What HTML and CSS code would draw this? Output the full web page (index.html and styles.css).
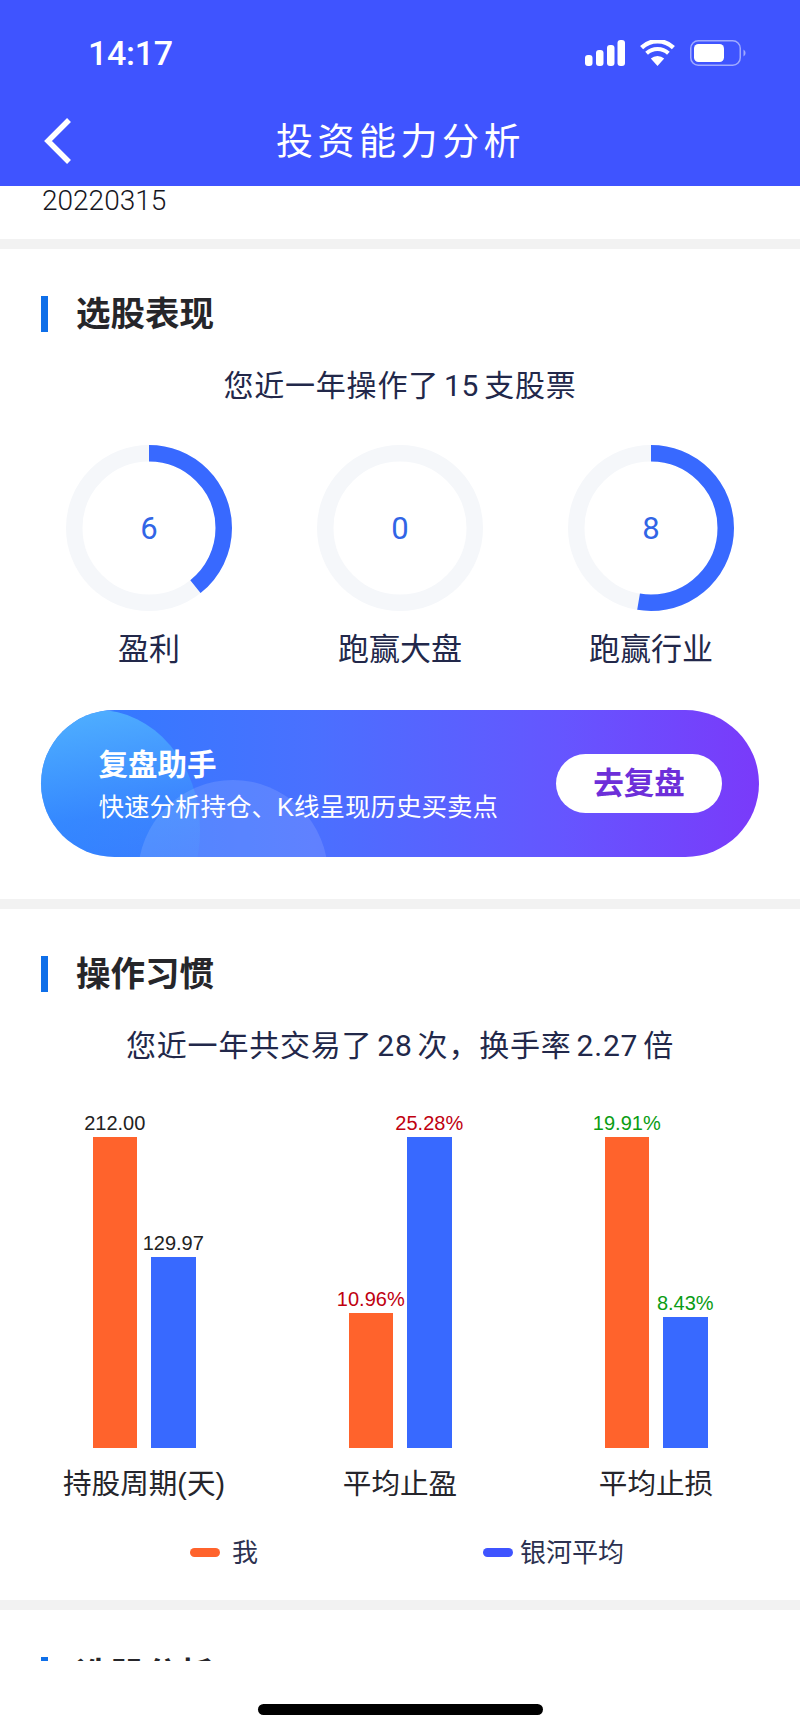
FILE: index.html
```html
<!DOCTYPE html>
<html lang="zh-CN">
<head>
<meta charset="utf-8">
<title>投资能力分析</title>
<link rel="stylesheet" href="styles.css">
</head>
<body>
<div class="app">
  <header class="header">
    <div class="status">
      <span class="time">14:17</span>
      <div class="status-icons">
        <svg class="signal" width="40" height="26" viewBox="0 0 40 26" fill="#fff">
          <rect x="0" y="15" width="7.5" height="11" rx="3"/>
          <rect x="11" y="10" width="7.5" height="16" rx="3"/>
          <rect x="22" y="5" width="7.5" height="21" rx="3"/>
          <rect x="32.5" y="0" width="7.5" height="26" rx="3"/>
        </svg>
        <svg class="wifi" width="35" height="26" viewBox="0 0 35 26">
          <path d="M17.5 26 L10.8 18.6 A10 10 0 0 1 24.2 18.6 Z" fill="#fff"/>
          <path d="M6.6 13.2 A16 16 0 0 1 28.4 13.2" fill="none" stroke="#fff" stroke-width="4"/>
          <path d="M1.6 7.6 A23 23 0 0 1 33.4 7.6" fill="none" stroke="#fff" stroke-width="4.4"/>
        </svg>
        <svg class="battery" width="56" height="26" viewBox="0 0 56 26">
          <rect x="0.75" y="0.75" width="49.5" height="24.5" rx="7.5" fill="none" stroke="#fff" stroke-opacity=".5" stroke-width="1.5"/>
          <rect x="4" y="4" width="30" height="18" rx="4.5" fill="#fff"/>
          <path d="M53.5 9.5 A4 4 0 0 1 53.5 16.5 Z" fill="#fff" fill-opacity=".5"/>
        </svg>
      </div>
    </div>
    <div class="nav">
      <svg class="back" width="28" height="46" viewBox="0 0 28 46">
        <path d="M25 2 L4 23 L25 44" fill="none" stroke="#fff" stroke-width="5.5"/>
      </svg>
      <h1 class="nav-title">投资能力分析</h1>
    </div>
  </header>

  <main class="scroll">
    <section class="date-card">20220315</section>

    <section class="card card-stocks">
      <h2 class="card-title">选股表现</h2>
      <p class="summary">您近一年操作了 15 支股票</p>
      <div class="rings">
        <div class="ring-item">
          <div class="ring">
            <svg class="ring-svg" width="166" height="166" viewBox="0 0 166 166">
              <circle class="ring-track" cx="83" cy="83" r="74.75"/>
              <circle class="ring-value" cx="83" cy="83" r="74.75" pathLength="15" stroke-dasharray="5.9 15"/>
            </svg>
            <span class="ring-num">6</span>
          </div>
          <div class="ring-label">盈利</div>
        </div>
        <div class="ring-item">
          <div class="ring">
            <svg class="ring-svg" width="166" height="166" viewBox="0 0 166 166">
              <circle class="ring-track" cx="83" cy="83" r="74.75"/>
            </svg>
            <span class="ring-num">0</span>
          </div>
          <div class="ring-label">跑赢大盘</div>
        </div>
        <div class="ring-item">
          <div class="ring">
            <svg class="ring-svg" width="166" height="166" viewBox="0 0 166 166">
              <circle class="ring-track" cx="83" cy="83" r="74.75"/>
              <circle class="ring-value" cx="83" cy="83" r="74.75" pathLength="15" stroke-dasharray="7.9 15"/>
            </svg>
            <span class="ring-num">8</span>
          </div>
          <div class="ring-label">跑赢行业</div>
        </div>
      </div>
      <div class="banner">
        <span class="blob blob-a"></span>
        <span class="blob blob-b"></span>
        <div class="banner-text">
          <div class="banner-title">复盘助手</div>
          <div class="banner-sub">快速分析持仓、K线呈现历史买卖点</div>
        </div>
        <div class="banner-btn">去复盘</div>
      </div>
    </section>

    <section class="card card-habits">
      <h2 class="card-title">操作习惯</h2>
      <p class="summary">您近一年共交易了 28 次，换手率 2.27 倍</p>
      <div class="chart">
        <div class="group">
          <div class="col"><span class="val">212.00</span><div class="bar bar-me" style="height:311.5px"></div></div>
          <div class="col"><span class="val">129.97</span><div class="bar bar-avg" style="height:191.5px"></div></div>
        </div>
        <div class="group">
          <div class="col"><span class="val val-up">10.96%</span><div class="bar bar-me" style="height:135.5px"></div></div>
          <div class="col"><span class="val val-up">25.28%</span><div class="bar bar-avg" style="height:311.5px"></div></div>
        </div>
        <div class="group">
          <div class="col"><span class="val val-down">19.91%</span><div class="bar bar-me" style="height:311.5px"></div></div>
          <div class="col"><span class="val val-down">8.43%</span><div class="bar bar-avg" style="height:131.5px"></div></div>
        </div>
      </div>
      <div class="axis">
        <div class="axis-label">持股周期(天)</div>
        <div class="axis-label">平均止盈</div>
        <div class="axis-label">平均止损</div>
      </div>
      <div class="legend">
        <div class="legend-item legend-me"><span class="swatch swatch-me"></span>我</div>
        <div class="legend-item legend-avg"><span class="swatch swatch-avg"></span>银河平均</div>
      </div>
    </section>

    <section class="card">
      <h2 class="card-title">选股分析</h2>
    </section>
  </main>

  <footer class="home">
    <span class="home-bar"></span>
  </footer>
</div>
</body>
</html>
```

FILE: styles.css
```css
* { box-sizing: border-box; }
html, body { margin: 0; padding: 0; background: #fff; }
body { font-family: "Liberation Sans", "Noto Sans CJK SC", sans-serif; color: #222; }
h1, h2, p { margin: 0; font-weight: inherit; font-size: inherit; }

.app { width: 800px; height: 1731px; display: flex; flex-direction: column; overflow: hidden; background: #fff; }

/* header */
.header { flex: none; height: 186px; background: #3f54ff; color: #fff; display: flex; flex-direction: column; }
.status { height: 107px; padding: 40px 54px 0 88px; display: flex; justify-content: space-between; align-items: flex-start; }
.time { font-family: Roboto, "Liberation Sans", sans-serif; font-weight: 500; font-size: 34px; line-height: 26px; letter-spacing: -0.3px; }
.status-icons { display: flex; align-items: center; gap: 15px; height: 26px; }
.nav { position: relative; flex: 1; display: flex; align-items: center; justify-content: center; }
.back { position: absolute; left: 44px; top: 11px; }
.nav-title { font-size: 37px; letter-spacing: 4.5px; font-weight: 400; line-height: 44px; margin-top: -8px; margin-left: 1px; }

/* content */
.scroll { flex: none; height: 1475px; overflow: hidden; background: #f2f2f2; display: flex; flex-direction: column; gap: 10px; }
.date-card { flex: none; height: 53px; padding: 0 42px 0; background: #fff; font-family: Roboto, "Liberation Sans", sans-serif; font-weight: 300; font-size: 28px; line-height: 30px; color: #16161e; }
.card { flex: none; background: #fff; padding-top: 47px; }
.card-stocks { height: 650px; }
.card-habits { height: 691px; }

.card-title { position: relative; height: 36px; padding-left: 76px; font-size: 34.5px; line-height: 36px; font-weight: 700; color: #26262a; }
.card-title::before { content: ""; position: absolute; left: 41px; top: 0; width: 7px; height: 36px; background: #0f6fe9; }

.summary { margin-top: 34px; height: 40px; line-height: 40px; text-align: center; font-family: Roboto, "Liberation Sans", "Noto Sans CJK SC", sans-serif; font-size: 30px; letter-spacing: .8px; word-spacing: -3.3px; color: #22284a; }

/* rings */
.rings { margin-top: 39px; padding: 0 23.5px; display: grid; grid-template-columns: repeat(3, 251px); }
.ring-item { display: flex; flex-direction: column; align-items: center; }
.ring { position: relative; width: 166px; height: 166px; display: flex; align-items: center; justify-content: center; }
.ring-svg { position: absolute; inset: 0; transform: rotate(-90deg); }
.ring-track { fill: none; stroke: #f5f7fa; stroke-width: 16.5; }
.ring-value { fill: none; stroke: #3869ff; stroke-width: 16.5; }
.ring-num { position: relative; font-family: Roboto, "Liberation Sans", sans-serif; font-weight: 400; font-size: 31px; color: #3165e6; }
.ring-label { margin-top: 19px; height: 40px; line-height: 40px; font-size: 31px; color: #22284a; }

/* banner */
.banner { position: relative; overflow: hidden; margin: 40px 41px 0; height: 147px; border-radius: 74px; padding: 0 37px 0 57.5px; display: flex; align-items: center; justify-content: space-between; color: #fff; background: linear-gradient(90deg, #2d7dff 0%, #4a70ff 38%, #6556ff 72%, #7a3afa 100%); }
.blob { position: absolute; border-radius: 50%; }
.blob-a { left: -45px; top: 0; width: 204px; height: 240px; background: linear-gradient(170deg, #52b4ff 0%, rgba(60, 150, 255, .45) 45%, rgba(45, 125, 255, 0) 80%); }
.blob-b { left: 97px; top: 70px; width: 190px; height: 190px; background: rgba(255, 255, 255, .12); }
.banner-text { position: relative; display: flex; flex-direction: column; }
.banner-title { font-size: 29.5px; line-height: 34px; font-weight: 700; margin-top: 2px; }
.banner-sub { font-size: 25.5px; line-height: 30px; margin-top: 10px; font-weight: 400; }
.banner-btn { position: relative; width: 166px; height: 59px; border-radius: 30px; background: #fff; color: #6d2fd9; font-size: 30.5px; font-weight: 700; line-height: 59px; text-align: center; }

/* chart */
.chart { margin-top: 44px; padding: 0 16px; height: 338px; display: grid; grid-template-columns: repeat(3, 256px); }
.group { display: flex; justify-content: center; align-items: flex-end; gap: 14px; }
.col { width: 44.5px; display: flex; flex-direction: column; align-items: center; }
.val { font-size: 20px; line-height: 20px; margin-bottom: 4px; white-space: nowrap; color: #222; }
.val-up { color: #c00010; }
.val-down { color: #0a9c14; }
.bar { width: 44.5px; }
.bar-me { background: #ff632c; }
.bar-avg { background: #3869ff; }

.axis { margin-top: 18px; padding: 0 16px; display: grid; grid-template-columns: repeat(3, 256px); }
.axis-label { text-align: center; height: 36px; line-height: 36px; font-size: 28.6px; color: #25252b; white-space: nowrap; }

.legend { margin-top: 33px; height: 36px; display: grid; grid-template-columns: 293px 1fr; padding-left: 190px; }
.legend-item { display: flex; align-items: center; font-size: 26px; line-height: 36px; color: #2c3150; }
.swatch { width: 30px; height: 9px; border-radius: 4.5px; margin-right: 12px; margin-top: -1px; }
.swatch-me { background: #ff632c; }
.swatch-avg { background: #3f54ff; margin-right: 7px; }

/* home indicator */
.home { flex: none; height: 70px; background: #fff; display: flex; justify-content: center; padding-top: 43px; }
.home-bar { width: 285px; height: 11px; border-radius: 6px; background: #000; }
```
